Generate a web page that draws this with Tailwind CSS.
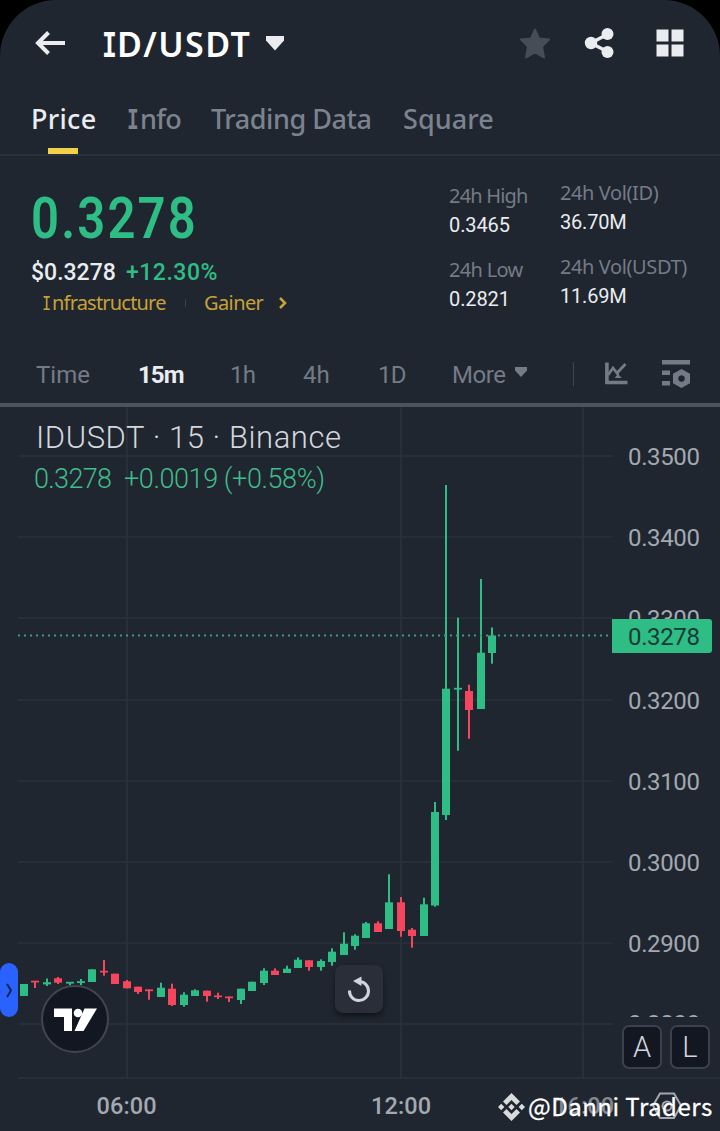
<!DOCTYPE html>
<html lang="en">
<head>
    <meta charset="UTF-8">
    <meta name="viewport" content="width=device-width, initial-scale=1.0">
    <title>ID/USDT</title>
    <script src="https://cdn.jsdelivr.net/npm/@tailwindcss/browser@4"></script>
</head>
<body class="bg-black">
    <div class="w-[720px] h-[1131px] bg-[#1f262f] rounded-t-[56px] overflow-hidden flex flex-col font-['Noto_Sans',sans-serif] whitespace-nowrap">

        <!-- Title bar -->
        <header class="h-[86px] shrink-0 flex items-center pl-[35px] pr-9 text-[#eaecef]">
            <svg class="w-[30px] h-6" viewBox="0 0 30 24" fill="none" stroke="currentColor" stroke-width="4"><path d="M3 12H30M13.5 1.5L3 12L13.5 22.5"/></svg>
            <h1 class="ml-[38px] mt-1 w-[150px] text-[34px] leading-10 font-semibold text-white tracking-[1.4px]"><span class="inline-block w-[15px] -ml-px font-['DejaVu_Sans_Mono',monospace] text-[33px] font-bold origin-left scale-x-75 tracking-normal">I</span>D/USDT</h1>
            <svg class="ml-3 w-[20px] h-[15px]" viewBox="0 0 20 15" fill="currentColor"><path d="M1 0H19V4.5L10 14.5L1 4.5Z"/></svg>
            <div class="ml-auto flex items-center">
                <svg class="w-[30px] h-[31px]" viewBox="0 0 30 31" fill="#474d57" stroke="#474d57" stroke-width="2" stroke-linejoin="round"><path d="M15 1.5L19 10.5L29 11.5L22 18.5L24 29.5L15 24.5L6 29.5L8 18.5L1 11.5L11 10.5Z"/></svg>
                <svg class="ml-[34px] w-[31px] h-8" viewBox="0 0 31 32" fill="currentColor"><path d="M24 7L7 16L24 25" fill="none" stroke="currentColor" stroke-width="3.5"/><circle cx="7" cy="16" r="6.2"/><circle cx="23.5" cy="7" r="6"/><circle cx="23.5" cy="25" r="6"/></svg>
                <svg class="ml-[41px] w-[28px] h-[28px]" viewBox="0 0 28 28" fill="currentColor"><path d="M0.500 0.500h12v12h-12zM15.500 0.500h12v12h-12zM0.500 15.500h12v12h-12zM15.500 15.500h12v12h-12z"/></svg>
            </div>
        </header>

        <!-- Tabs -->
        <nav class="h-[70px] shrink-0 flex pl-[31px] pt-[15px] text-[27px] leading-9 font-medium text-[#7c838f] border-b-2 border-[#2a313b]">
            <div class="w-24 text-[#eaecef] flex flex-col items-start justify-between"><span class="tracking-[0.3px]">Price</span><i class="ml-[17px] w-[30px] h-1.5 bg-[#f3d04a]"></i></div>
            <div class="w-[84px] tracking-[-0.7px]"><span class="inline-block w-[13px] font-['DejaVu_Sans_Mono',monospace] text-[26px] font-bold origin-left scale-x-75">I</span>nfo</div>
            <div class="w-[192px] tracking-[-0.450px]">Trading Data</div>
            <div class="tracking-[0.1px]">Square</div>
        </nav>

        <!-- Price summary -->
        <section class="h-[189px] shrink-0 flex">
            <div class="w-[449px] pl-[31px] pt-[33px]">
                <div class="font-[Roboto,sans-serif] text-[57px] leading-[60px] font-semibold text-[#2ebd85] origin-left scale-x-[0.86] tracking-[2.5px]">0.3278</div>
                <div class="mt-2 h-8 flex font-[Roboto,sans-serif] text-[23px] leading-8 font-medium">
                    <span class="w-[95px] text-[#eaecef]">$0.3278</span>
                    <span class="text-[#2ebd85] tracking-[0.5px]">+12.30%</span>
                </div>
                <div class="ml-[11px] -mt-0.5 h-8 flex items-center text-xl text-[#c9a136]">
                    <span class="w-[143px] tracking-[-0.8px]"><span class="inline-block w-2.5 font-['DejaVu_Sans_Mono',monospace] text-[19px] origin-left scale-x-80">I</span>nfrastructure</span>
                    <i class="w-px h-2 bg-[#3a414c]"></i>
                    <span class="ml-[18px] w-[74px] tracking-[-0.6px]">Gainer</span>
                    <svg class="w-2.5 h-3" viewBox="0 0 10 12" fill="none" stroke="currentColor" stroke-width="2.600"><path d="M2 1L7 6L2 11"/></svg>
                </div>
            </div>
            <dl class="w-[111px] pt-[26px] text-xl leading-7 text-[#747b87]">
                <dt class="tracking-[-0.8px]">24h High</dt>
                <dd class="mt-px mb-[17px] font-[Roboto,sans-serif] text-[#eaecef] tracking-[-0.1px]">0.3465</dd>
                <dt class="tracking-[-0.7px]">24h Low</dt>
                <dd class="mt-px font-[Roboto,sans-serif] text-[#eaecef] tracking-[-0.1px]">0.2821</dd>
            </dl>
            <dl class="pt-[23px] text-xl leading-7 text-[#747b87]">
                <dt class="tracking-[-0.4px]">24h Vol(ID)</dt>
                <dd class="mt-px mb-[17px] font-[Roboto,sans-serif] text-[#eaecef] tracking-[-0.2px]">36.70M</dd>
                <dt class="tracking-[-0.4px]">24h Vol(USDT)</dt>
                <dd class="mt-px font-[Roboto,sans-serif] text-[#eaecef] tracking-[-0.2px]">11.69M</dd>
            </dl>
        </section>

        <!-- Intervals -->
        <nav class="h-[58px] shrink-0 flex items-center pl-9 font-[Roboto,sans-serif] text-2xl text-[#747b87]">
            <span class="w-[102px] mt-0.5">Time</span>
            <span class="w-[92px] mt-0.5 font-bold text-[#eaecef] tracking-[-0.9px]">15m</span>
            <span class="w-[73px] mt-0.5 tracking-[-0.8px]">1h</span>
            <span class="w-[75px] mt-0.5">4h</span>
            <span class="w-[74px] mt-0.5 tracking-[-0.8px]">1D</span>
            <span class="w-[63px] mt-0.5 tracking-[-0.4px]">More</span>
            <svg class="w-3 h-2.5 mb-1" viewBox="0 0 12 10" fill="currentColor"><path d="M0 0H12V3.500L6 10L0 3.500Z"/></svg>
            <i class="ml-[46px] w-px h-6 bg-[#3f4651]"></i>
            <svg class="ml-[31px] mb-0.5 w-[23px] h-[23px]" viewBox="0 0 23 23" fill="none" stroke="currentColor" stroke-width="3.600"><path d="M1.900 0.500V20.500H22.500"/><path d="M3 13L8 6L12 11L20.500 2" stroke-width="2.800"/><path d="M13 9.500L14.300 13.500L17 16H9.500L11.700 13.500Z" fill="currentColor" stroke="none"/></svg>
            <svg class="ml-[34px] w-7 h-7" viewBox="0 0 28 28" fill="currentColor"><path d="M0 0H28V4.500H0zM0 10.500H8V15H0zM0 21H8V25.500H0z"/><path fill-rule="evenodd" d="M19.500 9L28 13.800V23.300L19.500 28L11 23.300V13.800zM19.500 15.200a3.300 3.300 0 1 0 0.010 0z"/></svg>
        </nav>
        <div class="h-1 shrink-0 bg-[#4d535d]"></div>

        <!-- Chart, in page coordinates from y=407 down -->
        <div class="relative h-[724px] shrink-0">
            <svg class="block w-[720px] h-[724px] font-[Roboto,sans-serif]" viewBox="0 407 720 724">
                <defs><clipPath id="axis"><rect x="612" y="990" width="108" height="27"/></clipPath></defs>
                <g id="grid" stroke="#2b323c" stroke-width="1.600"></g>
                <g id="labels" font-size="24" fill="#a3a8b1"></g>
                <text x="628" y="1032.400" font-size="24" textLength="72" fill="#a3a8b1" clip-path="url(#axis)">0.2800</text>
                <g font-weight="300">
                    <text x="36" y="447.500" font-size="31" textLength="305" fill="#d4d7dd">IDUSDT · 15 · Binance</text>
                    <g font-size="27" fill="#3fbd8a">
                        <text x="34" y="488" textLength="78">0.3278</text>
                        <text x="124" y="488" textLength="201">+0.0019 (+0.58%)</text>
                    </g>
                </g>
                <g id="candles"></g>
                <path d="M18 635.500H609" stroke="#3f9c7c" stroke-width="2" stroke-dasharray="2 4"/>
                <path d="M612 619H709a3 3 0 0 1 3 3V650a3 3 0 0 1 -3 3H612z" fill="#2ebd85"/>
                <text x="628" y="645" font-size="24" textLength="72" fill="#173a35">0.3278</text>
                <g font-size="23.500" font-weight="500" fill="#a3a8b1">
                    <text x="96.500" y="1114" textLength="60">06:00</text>
                    <text x="371" y="1114" textLength="60">12:00</text>
                    <text x="554" y="1114" textLength="60" opacity=".75">16:00</text>
                </g>
                <g fill="none" stroke="#a3a8b1" stroke-width="2"><path d="M660 1093.500H674L681 1105.500L674 1118H660L653 1105.500Z"/><circle cx="667" cy="1106" r="4.500"/></g>

                <!-- TradingView badge -->
                <circle cx="75" cy="1019" r="33" fill="#131722" stroke="#40454f" stroke-width="2"/>
                <g fill="#fff"><path d="M54 1008.500H72V1031H64V1017H54zM83.500 1031H74.500L84.500 1008.500H97z"/><circle cx="78" cy="1013" r="4.300"/></g>

                <!-- Scale mode buttons -->
                <g fill="#131722" stroke="#3b414c" stroke-width="2"><rect x="623" y="1026" width="38" height="42" rx="6"/><rect x="671" y="1026" width="38" height="42" rx="6"/></g>
                <g font-size="29" font-weight="300" fill="#d1d4dc" text-anchor="middle"><text x="642" y="1056.500">A</text><text x="690" y="1056.500">L</text></g>
            </svg>

            <!-- Drawing panel handle -->
            <div class="absolute left-0 top-[556px] w-[18px] h-[54px] rounded-[9px] bg-[#2962ff]">
                <svg class="absolute left-1.5 top-5 w-2 h-[15px]" viewBox="0 0 8 15" fill="none" stroke="#14264f" stroke-width="2"><path d="M1 1L5 7.500L1 14"/></svg>
            </div>

            <!-- Reset chart -->
            <div class="absolute left-[335px] top-[558px] w-12 h-12 rounded-lg bg-[#2a2e39] shadow-md shadow-black/40">
                <svg class="w-12 h-12" viewBox="0 0 48 48" fill="none" stroke="#d1d4dc" stroke-width="3"><path d="M14.500 25.500A9.500 9.500 0 1 0 24 16.500"/><path d="M18 16L26.500 11.500V21Z" fill="#d1d4dc" stroke="none"/></svg>
            </div>

            <!-- Watermark -->
            <div class="absolute left-[498px] top-[683px] h-[34px] flex items-center text-white">
                <svg class="w-[27px] h-7" viewBox="0 0 27 28" fill="#d9dadb"><path d="M13.500 0L22 8.500L18.500 12L13.500 7L8.500 12L5 8.500zM13.500 28L22 19.500L18.500 16L13.500 21L8.500 16L5 19.500zM13.500 10.800L16.700 14L13.500 17.200L10.300 14zM3.200 10.800L6.400 14L3.200 17.200L0 14zM23.800 10.800L27 14L23.800 17.200L20.600 14z"/></svg>
                <span class="ml-[3px] -mt-0.5 text-2xl tracking-[0.480px] font-['Noto_Sans_CJK_SC',sans-serif] [-webkit-text-stroke:0.3px_white]">@Danni Traders</span>
            </div>
        </div>
    </div>

    <script>
        const UP = '#2ebd85';
        const DOWN = '#f6465d';

        // [x, wick top, wick bottom, body top, body bottom, falling]
        const CANDLES = [
            [24, 984, 996, 984, 996], [35, 981, 988, 980.7, 982.5, 1], [47, 978.5, 986, 982.2, 984.4],
            [58, 977, 984, 978.3, 982.7, 1], [70, 982, 985.3, 981.8, 983.6], [81, 979, 985, 981.2, 983],
            [92, 969.3, 982, 969.3, 982], [104, 960, 975.7, 970.8, 972.5, 1], [115, 973.7, 984, 973.7, 984, 1],
            [127, 980, 988.3, 981.3, 988.3, 1], [138, 986.7, 994, 986.7, 992, 1], [149, 989.5, 999.7, 989.4, 991.2, 1],
            [161, 982.7, 997, 987.7, 997], [172, 983.7, 1006, 988.7, 1005, 1], [184, 992.3, 1006.7, 994.7, 1005],
            [195, 989.3, 996, 990.3, 996], [207, 990.7, 1001.7, 990.7, 996, 1], [218, 992.7, 999, 995.5, 997.2, 1],
            [229, 996.7, 1002, 996.5, 998.2, 1], [241, 988.7, 1004, 988.7, 1000], [252, 981.7, 991, 981.7, 991],
            [264, 968.3, 985, 970.7, 983], [275, 968.3, 975, 970.7, 975, 1], [287, 965.7, 973, 968.7, 973],
            [298, 957.3, 968, 959.7, 968], [309, 960.3, 970.7, 960.3, 967, 1], [321, 959.3, 970.7, 961, 967],
            [332, 948.3, 965.7, 951.7, 962], [344, 932.3, 955, 943.7, 955], [355, 934.3, 949.7, 935.7, 946],
            [366, 922, 938, 923.3, 938], [378, 921.3, 932, 923.3, 932, 1], [389, 874.3, 929, 902.3, 929],
            [401, 897, 936.7, 902.3, 931, 1], [412, 928, 947.7, 929.7, 936, 1], [424, 897.7, 936, 904.3, 936],
            [435, 802, 906.7, 812, 905.5], [446, 485, 820, 688.7, 815], [458, 617.7, 750.7, 687.8, 689.6],
            [469, 684.7, 738.7, 691, 710, 1], [481, 579, 709, 652.7, 709], [492, 627.5, 663.7, 635.5, 653]
        ];

        const PRICES = [
            [456, '0.3500'], [537, '0.3400'], [618, '0.3300'], [700, '0.3200'],
            [781, '0.3100'], [862, '0.3000'], [943, '0.2900'], [1024, '']
        ];

        let grid = '<path d="M18 1078H720M127 407V1078M401 407V1078M583 407V1078"/>';
        let labels = '';
        for (const [y, text] of PRICES) {
            grid += `<path d="M18 ${y}H612"/>`;
            if (text) labels += `<text x="628" y="${y + 9}" textLength="72">${text}</text>`;
        }
        document.getElementById('grid').innerHTML = grid;
        document.getElementById('labels').innerHTML = labels;

        document.getElementById('candles').innerHTML = CANDLES.map(([x, high, low, top, bottom, falling]) =>
            `<g fill="${falling ? DOWN : UP}"><rect x="${x - 1}" y="${high}" width="2" height="${low - high}"/>` +
            `<rect x="${x - 4}" y="${top}" width="8" height="${bottom - top}"/></g>`
        ).join('');
    </script>
</body>
</html>
